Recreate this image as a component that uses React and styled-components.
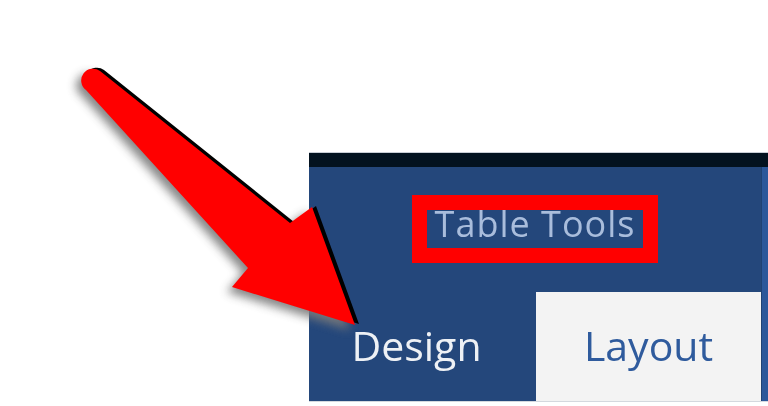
import styled, { createGlobalStyle } from "styled-components";

const GlobalStyle = createGlobalStyle`
	body {
		margin: 0;
		background: #ffffff;
		font-family: "Open Sans", "Noto Sans", sans-serif;
	}
`;

const ARROW =
	"M100 71 L290 223 L312 207 L355 325 L232 287 L248 268 L86 90 A11 11 0 0 1 100 71 Z";

const App = () => {
	return (
		<Page>
			<GlobalStyle />
			<Ribbon>
				<TopStrip />
				<RibbonBody>
					<Main>
						<Header>
							<Highlight>Table Tools</Highlight>
						</Header>
						<Tabs>
							<Tab $width={227} $shift={12}>
								<TabLabel>Design</TabLabel>
							</Tab>
							<Tab $width={225} $active>
								<TabLabel $active>Layout</TabLabel>
							</Tab>
						</Tabs>
					</Main>
					<SideStrip />
				</RibbonBody>
			</Ribbon>
			<Arrow width="768" height="406" viewBox="0 0 768 406">
				<defs>
					<filter id="glow" x="-20%" y="-20%" width="140%" height="140%">
						<feGaussianBlur stdDeviation="5" />
					</filter>
				</defs>
				<path d={ARROW} fill="#7a7a7a" opacity="0.9" filter="url(#glow)" transform="translate(-5 5)" />
				<path d={ARROW} fill="#000" transform="translate(4 -1)" />
				<path d={ARROW} fill="#ff0000" />
			</Arrow>
		</Page>
	);
};

export default App;

const Page = styled.div`
	position: relative;
	width: 768px;
	height: 406px;
	overflow: hidden;
	box-sizing: border-box;
	padding-top: 152px;
	display: flex;
	justify-content: flex-end;
	align-items: flex-start;
`;

const Ribbon = styled.div`
	width: 459px;
	height: 250px;
	display: flex;
	flex-direction: column;
	border-top: 1px solid #c9ced6;
	border-bottom: 1px solid #d4d8de;
	box-sizing: border-box;
`;

const TopStrip = styled.div`
	height: 14px;
	background: #03121f;
`;

const RibbonBody = styled.div`
	flex: 1;
	display: flex;
`;

const Main = styled.div`
	width: 452px;
	display: flex;
	flex-direction: column;
	background: #24477b;
`;

const SideStrip = styled.div`
	flex: 1;
	background: #2b579a;
	border-left: 1px solid #1f4273;
`;

const Header = styled.div`
	height: 125px;
	display: flex;
	align-items: center;
	justify-content: center;
	padding-bottom: 2px;
	box-sizing: border-box;
`;

const Highlight = styled.span`
	display: inline-block;
	border: 15px solid #ff0000;
	padding: 0 8px 10px;
	font-size: 36px;
	line-height: 28px;
	letter-spacing: 1px;
	color: #a9bddc;
	background: #24477b;
	filter: blur(0.4px);
`;

const Tabs = styled.div`
	flex: 1;
	display: flex;
`;

const Tab = styled.div`
	width: ${(p) => p.$width}px;
	display: flex;
	justify-content: center;
	box-sizing: border-box;
	padding-top: 25px;
	padding-right: ${(p) => p.$shift || 0}px;
	background: ${(p) => (p.$active ? "#f3f3f3" : "transparent")};
`;

const TabLabel = styled.span`
	font-size: 41px;
	line-height: normal;
	color: ${(p) => (p.$active ? "#2f5b9d" : "#eef1f5")};
	filter: blur(0.4px);
`;

const Arrow = styled.svg`
	position: absolute;
	left: 0;
	top: 0;
	pointer-events: none;
`;
